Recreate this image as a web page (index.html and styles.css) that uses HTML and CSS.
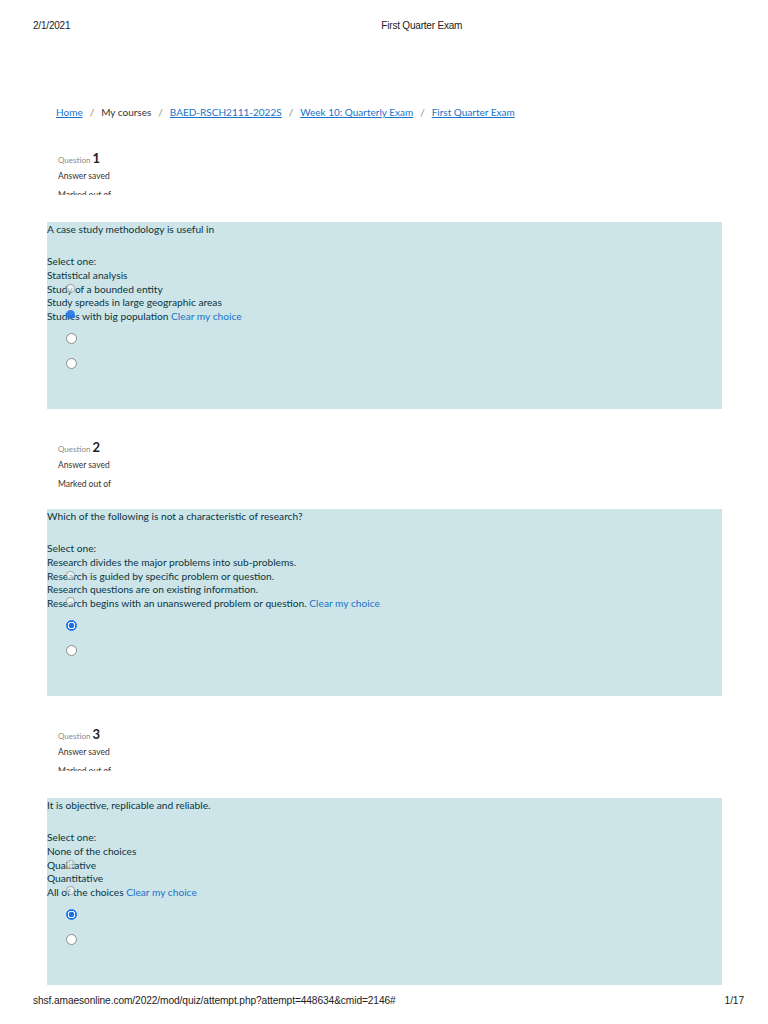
FILE: index.html
```html
<!DOCTYPE html>
<html lang="en">
<head>
<meta charset="utf-8">
<title>First Quarter Exam</title>
<link rel="stylesheet" href="styles.css">
</head>
<body>
<div class="page">
  <header class="print-head">
    <span class="date">2/1/2021</span>
    <span class="doc-title">First Quarter Exam</span>
  </header>

  <nav class="crumbs">
    <a href="#">Home</a><span class="sep">/</span>
    <span class="plain">My courses</span><span class="sep">/</span>
    <a href="#">BAED-RSCH2111-2022S</a><span class="sep">/</span>
    <a href="#">Week 10: Quarterly Exam</a><span class="sep">/</span>
    <a href="#">First Quarter Exam</a>
  </nav>

  <section class="question">
    <div class="info clipped">
      <div class="qno"><span class="qlabel">Question</span> <b>1</b></div>
      <div class="state">Answer saved</div>
      <div class="grade">Marked out of</div>
    </div>
    <div class="formulation">
      <div class="qtext">A case study methodology is useful in</div>
      <div class="answer">
        <div class="prompt">Select one:</div>
        <div class="opt">Statistical analysis</div>
        <div class="opt">Study of a bounded entity<span class="ghost r1"></span></div>
        <div class="opt">Study spreads in large geographic areas</div>
        <div class="opt">Studies with big population <a class="clear" href="#">Clear my choice</a><span class="ghost r2 on"></span></div>
      </div>
      <div class="radios">
        <span class="radio"></span>
        <span class="radio"></span>
      </div>
    </div>
  </section>

  <section class="question">
    <div class="info">
      <div class="qno"><span class="qlabel">Question</span> <b>2</b></div>
      <div class="state">Answer saved</div>
      <div class="grade">Marked out of</div>
    </div>
    <div class="formulation">
      <div class="qtext">Which of the following is not a characteristic of research?</div>
      <div class="answer">
        <div class="prompt">Select one:</div>
        <div class="opt">Research divides the major problems into sub-problems.</div>
        <div class="opt">Research is guided by specific problem or question.<span class="ghost r1"></span></div>
        <div class="opt">Research questions are on existing information.</div>
        <div class="opt">Research begins with an unanswered problem or question. <a class="clear" href="#">Clear my choice</a><span class="ghost r2"></span></div>
      </div>
      <div class="radios">
        <span class="radio on"></span>
        <span class="radio"></span>
      </div>
    </div>
  </section>

  <section class="question">
    <div class="info clipped">
      <div class="qno"><span class="qlabel">Question</span> <b>3</b></div>
      <div class="state">Answer saved</div>
      <div class="grade">Marked out of</div>
    </div>
    <div class="formulation">
      <div class="qtext">It is objective, replicable and reliable.</div>
      <div class="answer">
        <div class="prompt">Select one:</div>
        <div class="opt">None of the choices</div>
        <div class="opt">Qualitative<span class="ghost r1"></span></div>
        <div class="opt">Quantitative</div>
        <div class="opt">All of the choices <a class="clear" href="#">Clear my choice</a><span class="ghost r2"></span></div>
      </div>
      <div class="radios">
        <span class="radio on"></span>
        <span class="radio"></span>
      </div>
    </div>
  </section>

  <footer class="print-foot">
    <span>shsf.amaesonline.com/2022/mod/quiz/attempt.php?attempt=448634&amp;cmid=2146#</span>
    <span>1/17</span>
  </footer>
</div>
</body>
</html>
```

FILE: styles.css
```css
html, body {
  margin: 0;
  padding: 0;
  background: #ffffff;
}

.page {
  width: 768px;
  height: 1024px;
  overflow: hidden;
  font-family: "Lato", "Open Sans", sans-serif;
}

.print-head {
  display: flex;
  align-items: center;
  padding: 18px 0 0 33px;
  height: 14px;
  font-family: "Liberation Sans", Arial, sans-serif;
  font-size: 10px;
  letter-spacing: -0.2px;
  color: #222;
}

.doc-title {
  margin-left: 311px;
}

.crumbs {
  margin: 73px 0 0 56px;
  font-size: 10px;
  line-height: 14px;
  color: #333;
  display: flex;
  align-items: center;
}

.crumbs a {
  color: #1a73c8;
  text-decoration: underline;
}

.crumbs .plain {
  color: #333;
}

.crumbs .sep {
  color: #8a8a8a;
  margin: 0 7px;
}

.question {
  display: flex;
  flex-direction: column;
}

.info {
  margin: 32px 0 0 58px;
  color: #333;
  font-size: 8.5px;
}

.info.clipped {
  height: 44px;
  overflow: hidden;
}

.qno {
  line-height: 14px;
}

.qlabel {
  color: #8a8a8a;
  font-size: 8px;
}

.qno b {
  font-size: 13px;
  color: #222;
  font-weight: 700;
}

.state {
  margin-top: 2px;
  line-height: 14px;
}

.grade {
  margin-top: 5px;
  line-height: 14px;
}

.formulation {
  margin: 27px 0 0 47px;
  width: 675px;
  height: 187px;
  background: #cde5e9;
  color: #0b3440;
  font-size: 10.2px;
  box-sizing: border-box;
  padding-top: 0;
}

.question + .question .info {
  margin-top: 31px;
}

.question:last-of-type .info {
  margin-top: 31px;
}

.question + .question .info:not(.clipped) {
  height: 42px;
}

.qtext {
  line-height: 14px;
}

.answer {
  margin-top: 19px;
}

.prompt,
.opt {
  line-height: 13.8px;
  position: relative;
}

.clear {
  color: #1a73c8;
  text-decoration: none;
}

.radios {
  display: flex;
  flex-direction: column;
  gap: 14px;
  margin: 9px 0 0 19px;
}

.radio {
  display: block;
  width: 11px;
  height: 11px;
  box-sizing: border-box;
  border: 1px solid #8c8c8c;
  border-radius: 50%;
  background: #fff;
}

.radio.on {
  border: 1px solid #1a73e8;
  background: radial-gradient(circle, #1a73e8 0 2.6px, #ffffff 3.1px 3.6px, #1a73e8 4px);
}

.ghost {
  position: absolute;
  left: 19px;
  width: 9px;
  height: 9px;
  border-radius: 50%;
  box-sizing: border-box;
  border: 1px solid rgba(120, 120, 120, 0.6);
  background: rgba(255, 255, 255, 0.55);
}

.ghost.r1 {
  top: 1px;
}

.ghost.r2 {
  top: 0;
}

.ghost.on {
  border: 2px solid #1a73e8;
  background: #1a73e8;
  opacity: 0.85;
}

.print-foot {
  display: flex;
  justify-content: space-between;
  margin: 9px 0 0 0;
  padding: 0 24px 0 33px;
  font-family: "Liberation Sans", Arial, sans-serif;
  font-size: 10.2px;
  letter-spacing: -0.1px;
  color: #222;
  line-height: 14px;
}
```
